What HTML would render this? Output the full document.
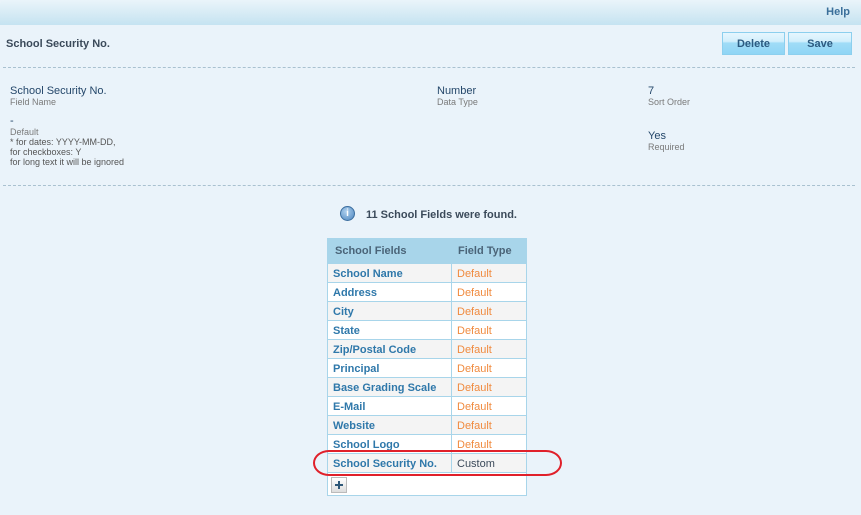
<!DOCTYPE html>
<html><head><meta charset="utf-8"><style>
*{margin:0;padding:0;box-sizing:border-box}
body{width:861px;height:515px;background:#eaf3fa;font-family:"Liberation Sans",sans-serif;position:relative;overflow:hidden}
.top{position:absolute;left:0;top:0;width:861px;height:25px;background:linear-gradient(#eaf4fa,#c5e3f1);border-radius:4px 4px 0 0}
.help{position:absolute;right:11px;top:6px;font-size:11px;font-weight:bold;color:#3a6f9a}
.title{position:absolute;left:6px;top:38px;font-size:11px;font-weight:bold;color:#3b4a5a}
.btn{position:absolute;top:32px;height:23px;border:1px solid #8ccfee;background:linear-gradient(#e6f6fe 0%,#d2effc 40%,#a0dcf7 48%,#8fd5f5 100%);font-size:11px;font-weight:bold;color:#2c5a80;text-align:center;line-height:22px}
.dash{position:absolute;left:3px;width:852px;border-top:1px dashed #a9c1d0}
.v{position:absolute;font-size:11px;color:#24476a}
.l{position:absolute;font-size:9px;color:#7a7a7a;line-height:10px}
.info{position:absolute;left:340px;top:206px;width:15px;height:15px;border-radius:50%;background:radial-gradient(circle at 40% 35%,#aed0ee,#4d86bf);border:1px solid #3b6e9f;color:#fff;font-size:10px;font-weight:bold;text-align:center;line-height:13px}
.found{position:absolute;left:366px;top:209px;font-size:11px;font-weight:bold;color:#3b4a5a}
table{position:absolute;left:327px;top:238px;width:200px;border-collapse:collapse;font-size:11px}
th{background:#a8d5ea;color:#4a6478;height:25px;text-align:left;font-weight:bold;padding-left:7px;border:1px solid #a8d5ea}
th+th{padding-left:6px}
td{height:19px;border:1px solid #a8d5ea;padding-left:5px;color:#f08a3e;padding-top:1px}
td:first-child{color:#2f78aa;font-weight:bold;width:124px}
tr:nth-child(even) td{background:#f4f4f4}
tr:nth-child(odd) td{background:#fff}
tr.last td{background:#fff !important;height:23px}
.plus{width:16px;height:16px;border:1px solid #bbb;background:linear-gradient(#fff,#ddd);position:relative;margin-left:-1px}
.plus:before{content:"";position:absolute;left:3px;top:6px;width:8px;height:2px;background:#2f5878}
.plus:after{content:"";position:absolute;left:6px;top:3px;width:2px;height:8px;background:#2f5878}
.oval{position:absolute;left:313px;top:450px;width:249px;height:26px;border:2px solid #e0202a;border-radius:16px/13px}
</style></head><body>
<div class="top"><div class="help">Help</div></div>
<div class="title">School Security No.</div>
<div class="btn" style="left:722px;width:63px">Delete</div>
<div class="btn" style="left:788px;width:64px">Save</div>
<div class="dash" style="top:67px"></div>
<div class="v" style="left:10px;top:85px">School Security No.</div>
<div class="l" style="left:10px;top:97px">Field Name</div>
<div class="v" style="left:437px;top:85px">Number</div>
<div class="l" style="left:437px;top:97px">Data Type</div>
<div class="v" style="left:648px;top:85px">7</div>
<div class="l" style="left:648px;top:97px">Sort Order</div>
<div class="v" style="left:10px;top:115px">-</div>
<div class="l" style="left:10px;top:127px">Default</div>
<div class="l" style="left:10px;top:137px;color:#555">* for dates: YYYY-MM-DD,<br>for checkboxes: Y<br>for long text it will be ignored</div>
<div class="v" style="left:648px;top:130px">Yes</div>
<div class="l" style="left:648px;top:142px">Required</div>
<div class="dash" style="top:185px"></div>
<div class="info">i</div>
<div class="found">11 School Fields were found.</div>
<table>
<tr><th>School Fields</th><th>Field Type</th></tr>
<tr><td>School Name</td><td>Default</td></tr>
<tr><td>Address</td><td>Default</td></tr>
<tr><td>City</td><td>Default</td></tr>
<tr><td>State</td><td>Default</td></tr>
<tr><td>Zip/Postal Code</td><td>Default</td></tr>
<tr><td>Principal</td><td>Default</td></tr>
<tr><td>Base Grading Scale</td><td>Default</td></tr>
<tr><td>E-Mail</td><td>Default</td></tr>
<tr><td>Website</td><td>Default</td></tr>
<tr><td>School Logo</td><td>Default</td></tr>
<tr><td>School Security No.</td><td style="color:#3b4a5a">Custom</td></tr>
<tr class="last"><td colspan="2" style="padding-left:4px"><div class="plus"></div></td></tr>
</table>
<div class="oval"></div>
</body></html>
